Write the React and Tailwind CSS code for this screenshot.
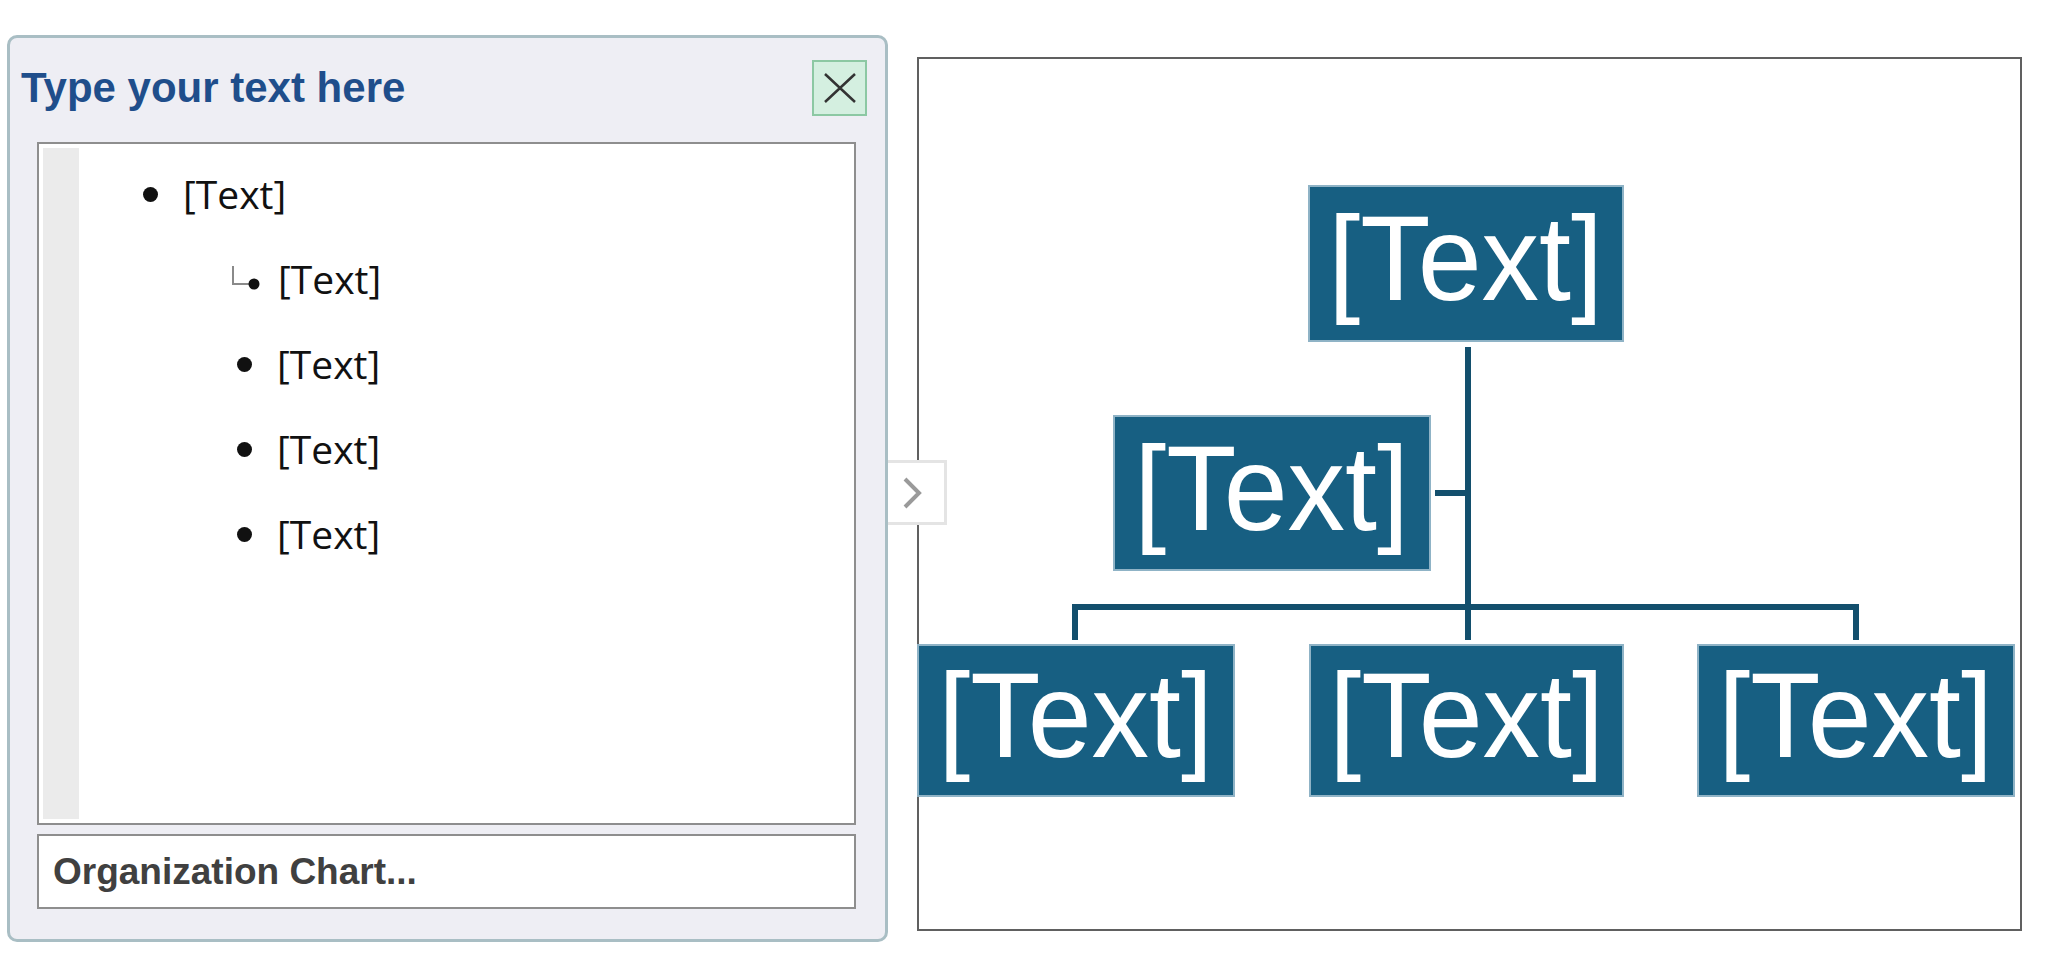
const NODE_TEXT = "[Text]";

function Bullet() {
  return <span className="block w-[15px] h-[15px] rounded-full bg-[#111]" />;
}

function Row({ level, first }) {
  return (
    <li className={level === 0 ? "h-[85px] flex items-center pl-[64px]" : first ? "h-[85px] flex items-center pl-[152px]" : "h-[85px] flex items-center pl-[158px]"}>
      {level === 1 && first ? (
        <svg width="30" height="30" viewBox="0 0 30 30" className="shrink-0">
          <path d="M2 1 V19 H18" fill="none" stroke="#8a8a8a" strokeWidth="2" />
          <circle cx="23" cy="19" r="5.5" fill="#111" />
        </svg>
      ) : (
        <Bullet />
      )}
      <span className={level === 1 && first ? "ml-[17px] text-[39px] text-[#111] font-['Open_Sans',Arial,sans-serif]" : "ml-[25px] text-[39px] text-[#111] font-['Open_Sans',Arial,sans-serif]"}>
        {NODE_TEXT}
      </span>
    </li>
  );
}

function TextPane() {
  return (
    <div className="w-[881px] h-[907px] shrink-0 rounded-[10px] border-[3px] border-[#a9bec4] bg-[#eeeef4] flex flex-col">
      <div className="mt-[22px] h-[56px] pl-[11px] pr-[18px] flex items-center justify-between">
        <span className="text-[42px] leading-[48px] font-bold text-[#1f4e8b] font-['Liberation_Sans',Arial,sans-serif]">
          Type your text here
        </span>
        <button className="w-[55px] h-[56px] border-2 border-[#8cc8a3] bg-[#d4efe0] flex items-center justify-center">
          <svg width="34" height="32" viewBox="0 0 34 32">
            <path d="M2 2 L32 30 M32 2 L2 30" stroke="#333" strokeWidth="2.5" fill="none" />
          </svg>
        </button>
      </div>

      <div className="mt-[26px] ml-[27px] mr-[29px] h-[683px] border-2 border-[#8e8e8e] bg-white p-[4px] flex">
        <div className="w-[36px] bg-[#ebebeb]" />
        <ul className="flex-1 pt-[4px]">
          <Row level={0} />
          <Row level={1} first />
          <Row level={1} />
          <Row level={1} />
          <Row level={1} />
        </ul>
      </div>

      <div className="mt-[9px] ml-[27px] mr-[29px] h-[75px] border-2 border-[#8e8e8e] bg-white flex items-center pl-[14px]">
        <span className="text-[37px] leading-[44px] font-bold text-[#404040] font-['Liberation_Sans',Arial,sans-serif]">
          Organization Chart...
        </span>
      </div>
    </div>
  );
}

function Node({ className }) {
  return (
    <div className={"absolute flex items-center justify-center bg-[#175f82] border-2 border-[#8fb3c6] " + className}>
      <span className="inline-block scale-x-[0.95] -translate-y-[5px] text-white text-[121px] leading-none font-['Liberation_Sans',Arial,sans-serif]">
        {NODE_TEXT}
      </span>
    </div>
  );
}

function Canvas() {
  return (
    <div className="relative mt-[22px] w-[1105px] h-[874px] shrink-0 border-2 border-[#606060] bg-white">
      {/* connectors */}
      <div className="absolute left-[546px] top-[288px] w-[6px] h-[293px] bg-[#134f6d]" />
      <div className="absolute left-[516px] top-[431px] w-[30px] h-[6px] bg-[#134f6d]" />
      <div className="absolute left-[153px] top-[545px] w-[787px] h-[6px] bg-[#134f6d]" />
      <div className="absolute left-[153px] top-[545px] w-[6px] h-[36px] bg-[#134f6d]" />
      <div className="absolute left-[934px] top-[545px] w-[6px] h-[36px] bg-[#134f6d]" />

      {/* nodes */}
      <Node className="left-[389px] top-[126px] w-[316px] h-[157px]" />
      <Node className="left-[194px] top-[356px] w-[318px] h-[156px]" />
      <Node className="left-[-2px] top-[585px] w-[318px] h-[153px]" />
      <Node className="left-[390px] top-[585px] w-[315px] h-[153px]" />
      <Node className="left-[778px] top-[585px] w-[318px] h-[153px]" />
    </div>
  );
}

function CollapseTab() {
  return (
    <div className="absolute z-10 left-[888px] top-[460px] w-[59px] h-[65px] bg-white border-y-[3px] border-r-[3px] border-[#e4e4e4]">
      <svg width="56" height="59" viewBox="0 0 56 59" className="block">
        <path d="M17 16 L31 30 L17 44" fill="none" stroke="#9a9a9a" strokeWidth="4" />
      </svg>
    </div>
  );
}

export default function App() {
  return (
    <div className="relative min-h-screen w-full bg-white flex items-start pl-[7px] pt-[35px] gap-[29px]">
      <TextPane />
      <CollapseTab />
      <Canvas />
    </div>
  );
}
